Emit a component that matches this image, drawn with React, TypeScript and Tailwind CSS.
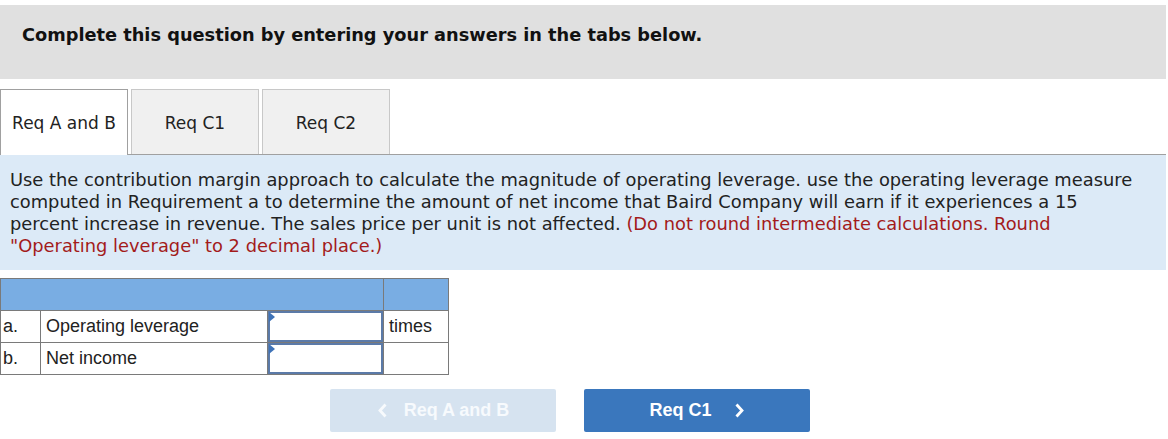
import React from "react";

const VERDANA = "font-['Verdana','DejaVu_Sans',sans-serif]";
const ARIAL = "font-['Arial','Liberation_Sans',sans-serif]";

const TABS = ["Req A and B", "Req C1", "Req C2"];

function AnswerInput() {
  return (
    <div className="relative h-full w-full border-2 border-[#5b7aa8] bg-white">
      <span className="absolute left-[-1px] top-[-1px] h-0 w-0 border-y-[5px] border-l-[6px] border-y-transparent border-l-[#3f73b8]" />
    </div>
  );
}

export default function App() {
  return (
    <div className="h-[439px] w-[1168px] overflow-hidden bg-white pt-[5px] text-[#222]">
      {/* ── Instructions banner ── */}
      <div className="h-[74px] w-[1166px] bg-[#e0e0e0] pl-[22px] pt-[18px]">
        <p className={`${VERDANA} text-[17.75px] font-bold leading-[24px] text-[#111]`}>
          Complete this question by entering your answers in the tabs below.
        </p>
      </div>

      {/* ── Tabs ── */}
      <div className="mt-[10px] flex h-[66px] w-[1166px] items-end gap-[3px] border-b border-[#a0a0a0]">
        {TABS.map((t, i) => (
          <div
            key={t}
            className={`${VERDANA} flex h-[65px] w-[128px] items-center justify-center border border-b-0 pt-[3px] text-[17px] ${
              i === 0
                ? "relative -mb-px h-[66px] w-[127px] border-[#a0a0a0] bg-white"
                : "border-[#c8c8c8] bg-[#f0f0f0]"
            }`}
          >
            {t}
          </div>
        ))}
      </div>

      {/* ── Question text ── */}
      <div className="w-[1166px] bg-[#dceaf7] px-[10px] pb-[13px] pt-[14px]">
        <p className={`${VERDANA} whitespace-nowrap text-[17.85px] leading-[22px] text-[#222]`}>
          Use the contribution margin approach to calculate the magnitude of operating leverage. use the operating leverage measure
          <br />
          computed in Requirement a to determine the amount of net income that Baird Company will earn if it experiences a 15
          <br />
          percent increase in revenue. The sales price per unit is not affected.{" "}
          <span className="text-[#a31b1b]">
            (Do not round intermediate calculations. Round
            <br />
            "Operating leverage" to 2 decimal place.)
          </span>
        </p>
      </div>

      {/* ── Answer table ── */}
      <table className={`${ARIAL} mt-[8px] border-collapse text-[18px] text-[#222]`}>
        <tbody>
          <tr className="h-[32px] bg-[#79ade3]">
            <td colSpan={3} className="w-[383px] border border-[#7a7a7a]" />
            <td className="w-[65px] border border-[#7a7a7a]" />
          </tr>
          <tr className="h-[32px]">
            <td className="w-[40px] border border-[#7a7a7a] pl-[2px]">a.</td>
            <td className="w-[227px] border border-[#7a7a7a] pl-[5px]">Operating leverage</td>
            <td className="h-[32px] w-[116px] border border-[#7a7a7a] p-0">
              <AnswerInput />
            </td>
            <td className="border border-[#7a7a7a] pl-[5px]">times</td>
          </tr>
          <tr className="h-[32px]">
            <td className="border border-[#7a7a7a] pl-[2px]">b.</td>
            <td className="border border-[#7a7a7a] pl-[5px]">Net income</td>
            <td className="h-[32px] border border-[#7a7a7a] p-0">
              <AnswerInput />
            </td>
            <td className="border border-[#7a7a7a]" />
          </tr>
        </tbody>
      </table>

      {/* ── Navigation ── */}
      <div className={`${ARIAL} ml-[330px] mt-[14px] flex gap-[28px] text-[18px] font-bold text-white`}>
        <button className="flex h-[43px] w-[226px] items-center justify-center gap-[16px] rounded-[2px] bg-[#d6e3f0] text-[#f7fafd]">
          <svg width="11" height="15" viewBox="0 0 11 15" fill="none">
            <path d="M8.5 1.5 3 7.5l5.5 6" stroke="currentColor" strokeWidth="2.8" />
          </svg>
          Req A and B
        </button>
        <button className="flex h-[43px] w-[226px] items-center justify-center gap-[22px] rounded-[2px] bg-[#3a77bd]">
          Req C1
          <svg width="11" height="15" viewBox="0 0 11 15" fill="none">
            <path d="M2.5 1.5 8 7.5l-5.5 6" stroke="currentColor" strokeWidth="2.8" />
          </svg>
        </button>
      </div>
    </div>
  );
}
